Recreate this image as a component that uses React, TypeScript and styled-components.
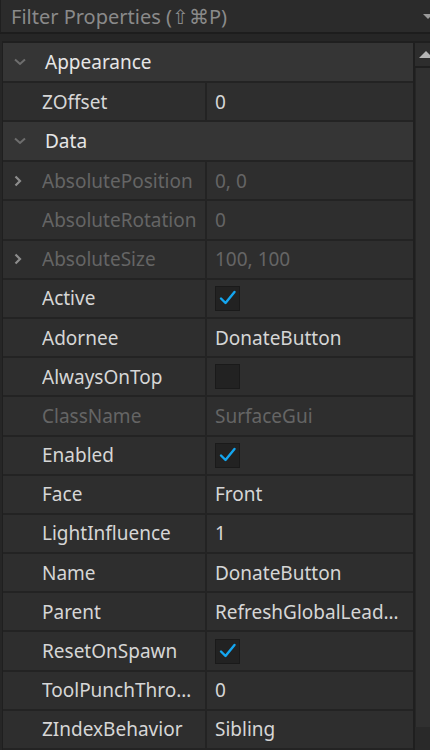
import React from "react";
import styled, { createGlobalStyle } from "styled-components";

const GlobalStyle = createGlobalStyle`
  html, body {
    margin: 0;
    padding: 0;
    background: #262626;
  }
  * {
    box-sizing: border-box;
  }
`;

const Panel = styled.div`
  width: 430px;
  height: 750px;
  overflow: hidden;
  background: #262626;
  font-family: "Noto Sans", "Open Sans", sans-serif;
  font-size: 19px;
  display: flex;
  flex-direction: column;
`;

const FilterBar = styled.div`
  height: 34px;
  flex-shrink: 0;
  display: flex;
  align-items: center;
  justify-content: space-between;
  padding-left: 10px;
  background: #2b2b2b;
  border-left: 1px solid #1f1f1f;
  border-bottom: 2px solid #1d1d1d;
  color: #8a8a8a;
  font-size: 20px;
`;

const DropArrow = styled.span`
  width: 0;
  height: 0;
  margin-right: -3px;
  border-left: 5px solid transparent;
  border-right: 5px solid transparent;
  border-top: 5px solid #9a9a9a;
`;

const Body = styled.div`
  flex: 1;
  display: flex;
  margin-top: 7px;
  min-height: 0;
`;

const Table = styled.div`
  flex: 1;
  margin-left: 2px;
  border-top: 2px solid #1f1f1f;
  border-left: 1px solid #1f1f1f;
  border-right: 2px solid #1f1f1f;
  display: flex;
  flex-direction: column;
`;

const GroupRow = styled.div`
  height: 40px;
  display: flex;
  align-items: center;
  background: #353535;
  border-bottom: 2px solid #232323;
  color: #e6e6e6;
`;

const GroupChevron = styled.span`
  width: 42px;
  flex-shrink: 0;
  display: flex;
  padding-left: 11px;
  color: #6e6e6e;
`;

const Row = styled.div`
  height: 39.2px;
  display: grid;
  grid-template-columns: 204px 1fr;
  background: #2e2e2e;
  border-bottom: 2px solid #232323;
`;

const NameCell = styled.div<{ $dim?: boolean }>`
  display: flex;
  align-items: center;
  min-width: 0;
  overflow: hidden;
  border-right: 2px solid #232323;
  color: ${(p) => (p.$dim ? "#656565" : "#d6d6d6")};
`;

const Expander = styled.span`
  width: 39px;
  flex-shrink: 0;
  display: flex;
  padding-left: 11px;
  color: #8c8c8c;
`;

const Label = styled.span`
  white-space: nowrap;
  overflow: hidden;
  text-overflow: ellipsis;
  padding-right: 4px;
`;

const ValueCell = styled.div<{ $dim?: boolean }>`
  display: flex;
  align-items: center;
  min-width: 0;
  overflow: hidden;
  padding-left: 8px;
  padding-right: 4px;
  color: ${(p) => (p.$dim ? "#656565" : "#d6d6d6")};
`;

const CheckBox = styled.span`
  width: 25px;
  height: 25px;
  display: flex;
  align-items: center;
  justify-content: center;
  background: #222222;
  border: 1px solid #1a1a1a;
`;

const Scrollbar = styled.div`
  width: 15px;
  flex-shrink: 0;
  display: flex;
  flex-direction: column;
  background: #292929;
`;

const ScrollButton = styled.div`
  height: 27px;
  display: flex;
  align-items: center;
  justify-content: center;
  background: #2d2d2d;
  border-bottom: 2px solid #1f1f1f;
  border-top: 2px solid #1f1f1f;
`;

const UpArrow = styled.span`
  width: 0;
  height: 0;
  margin-left: 6px;
  border-left: 7px solid transparent;
  border-right: 7px solid transparent;
  border-bottom: 7px solid #b4b4b4;
`;

const Thumb = styled.div`
  height: 659px;
  background: #303030;
  border-left: 1px solid #262626;
`;

function ChevronRight() {
  return (
    <svg width="8" height="12" viewBox="0 0 8 12">
      <path d="M1.5 1.5 L6 6 L1.5 10.5" fill="none" stroke="currentColor" strokeWidth="2.2" />
    </svg>
  );
}

function ChevronDown() {
  return (
    <svg width="12" height="8" viewBox="0 0 12 8">
      <path d="M1 1.5 L6 6 L11 1.5" fill="none" stroke="currentColor" strokeWidth="2" />
    </svg>
  );
}

function Tick() {
  return (
    <svg width="18" height="16" viewBox="0 0 18 16">
      <path
        d="M2 8.5 L6.5 13 L15.5 2"
        fill="none"
        stroke="#14a6f0"
        strokeWidth="2.4"
        strokeLinecap="round"
        strokeLinejoin="round"
      />
    </svg>
  );
}

type Prop = {
  name: string;
  value?: string;
  checked?: boolean;
  dim?: boolean;
  expandable?: boolean;
};

const groups: { title: string; props: Prop[] }[] = [
  { title: "Appearance", props: [{ name: "ZOffset", value: "0" }] },
  {
    title: "Data",
    props: [
      { name: "AbsolutePosition", value: "0, 0", dim: true, expandable: true },
      { name: "AbsoluteRotation", value: "0", dim: true },
      { name: "AbsoluteSize", value: "100, 100", dim: true, expandable: true },
      { name: "Active", checked: true },
      { name: "Adornee", value: "DonateButton" },
      { name: "AlwaysOnTop", checked: false },
      { name: "ClassName", value: "SurfaceGui", dim: true },
      { name: "Enabled", checked: true },
      { name: "Face", value: "Front" },
      { name: "LightInfluence", value: "1" },
      { name: "Name", value: "DonateButton" },
      { name: "Parent", value: "RefreshGlobalLeaderboard" },
      { name: "ResetOnSpawn", checked: true },
      { name: "ToolPunchThroughDistance", value: "0" },
      { name: "ZIndexBehavior", value: "Sibling" },
    ],
  },
];

function PropertyRow({ prop }: { prop: Prop }) {
  return (
    <Row>
      <NameCell $dim={prop.dim}>
        <Expander>{prop.expandable && <ChevronRight />}</Expander>
        <Label>{prop.name}</Label>
      </NameCell>
      <ValueCell $dim={prop.dim}>
        {prop.checked !== undefined ? (
          <CheckBox>{prop.checked && <Tick />}</CheckBox>
        ) : (
          <Label>{prop.value}</Label>
        )}
      </ValueCell>
    </Row>
  );
}

export default function App() {
  return (
    <>
      <GlobalStyle />
      <Panel>
        <FilterBar>
          <span>Filter Properties (⇧⌘P)</span>
          <DropArrow />
        </FilterBar>
        <Body>
          <Table>
            {groups.map((g) => (
              <React.Fragment key={g.title}>
                <GroupRow>
                  <GroupChevron>
                    <ChevronDown />
                  </GroupChevron>
                  <span>{g.title}</span>
                </GroupRow>
                {g.props.map((p) => (
                  <PropertyRow key={p.name} prop={p} />
                ))}
              </React.Fragment>
            ))}
          </Table>
          <Scrollbar>
            <ScrollButton>
              <UpArrow />
            </ScrollButton>
            <Thumb />
          </Scrollbar>
        </Body>
      </Panel>
    </>
  );
}
